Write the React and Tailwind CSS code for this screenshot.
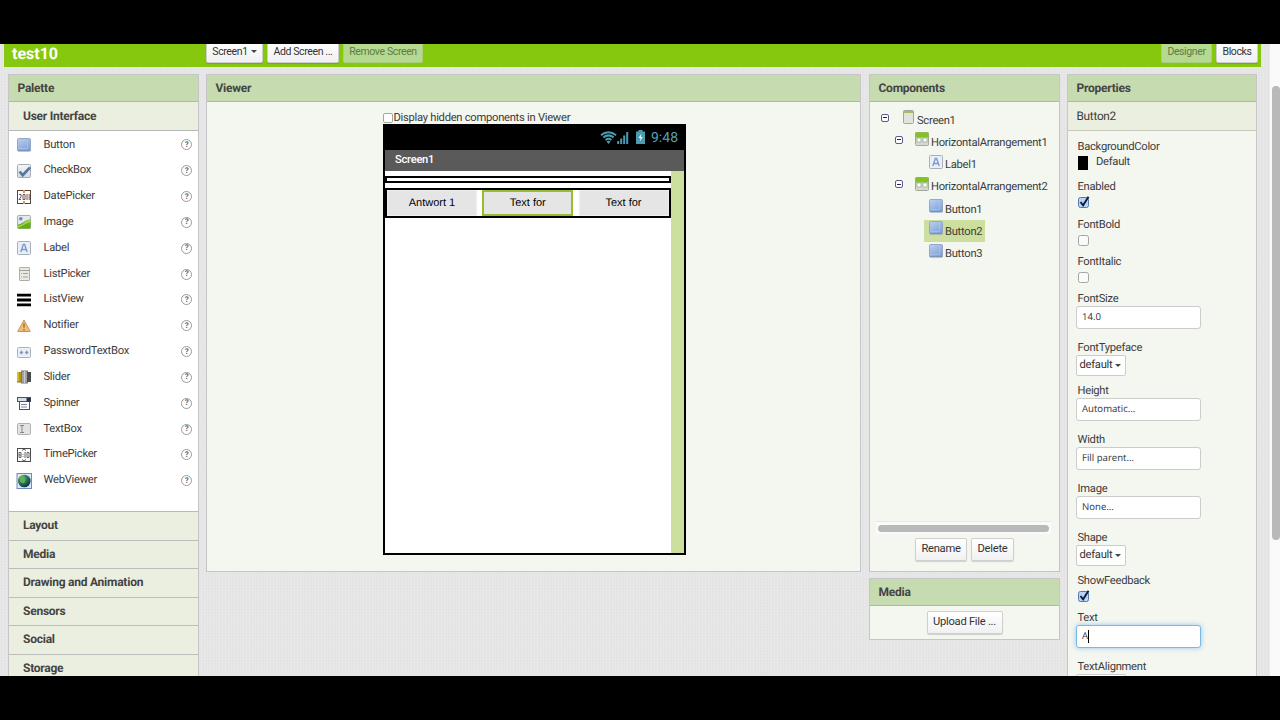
import React from "react";
import clsx from "clsx";

const PALETTE = [
  "Button",
  "CheckBox",
  "DatePicker",
  "Image",
  "Label",
  "ListPicker",
  "ListView",
  "Notifier",
  "PasswordTextBox",
  "Slider",
  "Spinner",
  "TextBox",
  "TimePicker",
  "WebViewer",
];

const SECTIONS = ["Layout", "Media", "Drawing and Animation", "Sensors", "Social", "Storage"];

const TREE = [
  { name: "Screen1", icon: "Screen", toggle: true, indent: "pl-[11px]", gap: "ml-[11px]" },
  { name: "HorizontalArrangement1", icon: "Arrangement", toggle: true, indent: "pl-[25px]", gap: "ml-[11px]" },
  { name: "Label1", icon: "Label", indent: "pl-[59px]" },
  { name: "HorizontalArrangement2", icon: "Arrangement", toggle: true, indent: "pl-[25px]", gap: "ml-[11px]" },
  { name: "Button1", icon: "Button", indent: "pl-[59px]" },
  { name: "Button2", icon: "Button", indent: "pl-[59px]", selected: true },
  { name: "Button3", icon: "Button", indent: "pl-[59px]" },
];

const PROPERTIES = [
  { label: "BackgroundColor", type: "color", value: "Default", height: "h-[40px]" },
  { label: "Enabled", type: "check", value: true, height: "h-[37.5px]" },
  { label: "FontBold", type: "check", value: false, height: "h-[37.5px]" },
  { label: "FontItalic", type: "check", value: false, height: "h-[37px]" },
  { label: "FontSize", type: "text", value: "14.0", height: "h-[49px]" },
  { label: "FontTypeface", type: "select", value: "default", height: "h-[43px]" },
  { label: "Height", type: "text", value: "Automatic...", height: "h-[49px]" },
  { label: "Width", type: "text", value: "Fill parent...", height: "h-[49px]" },
  { label: "Image", type: "text", value: "None...", height: "h-[49px]" },
  { label: "Shape", type: "select", value: "default", height: "h-[43px]" },
  { label: "ShowFeedback", type: "check", value: true, height: "h-[37px]" },
  { label: "Text", type: "text", value: "A", focused: true, height: "h-[49px]" },
  { label: "TextAlignment", type: "select", height: "h-[43px]" },
];

function ComponentIcon({ name }) {
  return (
    <svg width="16" height="16" viewBox="0 0 16 16" className="shrink-0">
      <defs>
        <linearGradient id="blue" x1="0" y1="0" x2="0.6" y2="1">
          <stop offset="0" stopColor="#bdd1f0" />
          <stop offset="1" stopColor="#7fa3d8" />
        </linearGradient>
        <linearGradient id="pale" x1="0" y1="0" x2="0" y2="1">
          <stop offset="0" stopColor="#f4f6f9" />
          <stop offset="1" stopColor="#d5dae2" />
        </linearGradient>
        <radialGradient id="globe" cx="0.35" cy="0.3" r="0.8">
          <stop offset="0" stopColor="#8fc7b0" />
          <stop offset="0.4" stopColor="#2f8060" />
          <stop offset="1" stopColor="#0a2440" />
        </radialGradient>
      </defs>
      {name === "Button" && (
        <>
          <rect x="1.5" y="1.5" width="13" height="12.5" rx="1" fill="url(#blue)" stroke="#98a8c4" />
          <path d="M11.5 2v9.5H2" fill="none" stroke="#a9c1e8" strokeWidth="0.8" />
          <path d="M2 13.7h12.5" stroke="#7b90b4" />
        </>
      )}
      {name === "CheckBox" && (
        <>
          <rect x="1.5" y="1.5" width="13" height="13" rx="1" fill="url(#pale)" stroke="#a6acb6" />
          <path d="M3.5 8.5l3.2 3.7L14 4.5" fill="none" stroke="#53799f" strokeWidth="2.6" />
        </>
      )}
      {name === "DatePicker" && (
        <>
          <rect x="1.5" y="1.5" width="13" height="13" fill="#fff" stroke="#5a4538" />
          <path d="M8 1v3M8 12v3" stroke="#d39a4a" strokeWidth="2" />
          <path d="M3 5.5h2v2.5l-2 2.5h2M7 5.5h2v5H7zM11 5v6M13.2 5v6" fill="none" stroke="#70545c" />
        </>
      )}
      {name === "Image" && (
        <>
          <rect x="1.5" y="1.5" width="13" height="13" rx="1" fill="#e3e9f0" stroke="#a8b1a8" />
          <path d="M2 14.5V10.5C6 10.5 8 6 14.5 5.5v9z" fill="#63ad18" />
          <path d="M2 11.5c5 0 7-5.5 12.5-6v3C9 9 6 13 2 13.5z" fill="#a1d34e" />
          <circle cx="4.8" cy="4.8" r="1.8" fill="#7487ad" />
        </>
      )}
      {name === "Label" && (
        <>
          <rect x="1.5" y="1.5" width="13" height="13" rx="1" fill="#e9eef7" stroke="#a9b0bc" />
          <path d="M4.8 12L7.3 4.5h1.3L11.2 12M5.8 9.5h4.3" fill="none" stroke="#7d9cce" strokeWidth="1.4" />
        </>
      )}
      {name === "ListPicker" && (
        <>
          <rect x="3.5" y="1.5" width="10" height="13" rx="0.5" fill="#e9ebe2" stroke="#aeb0a8" />
          <path d="M4 4.5h9M5 7.5h1M7 7.5h5M5 11h1M7 11h5" stroke="#a0a398" />
        </>
      )}
      {name === "ListView" && <path d="M1 3.2h14M1 8h14M1 12.8h14" stroke="#000" strokeWidth="2.8" />}
      {name === "Notifier" && (
        <>
          <path d="M8 2L14.3 13.5H1.7z" fill="#f4bd72" stroke="#bb985f" strokeLinejoin="round" />
          <path d="M8 5.5v4M8 11v1.5" stroke="#8d6534" strokeWidth="1.3" />
        </>
      )}
      {name === "PasswordTextBox" && (
        <>
          <rect x="1.5" y="3.5" width="13" height="10" rx="1" fill="#eceff5" stroke="#acb2bd" />
          <path d="M3.7 8.5h3.4M5.4 6.8v3.4M9 8.5h3.4M10.7 6.8v3.4" stroke="#839abd" strokeWidth="1.5" />
        </>
      )}
      {name === "Slider" && (
        <>
          <rect x="1" y="3" width="5" height="10" fill="#d8bc24" />
          <path d="M1 13h5M4 3v10" stroke="#806d18" />
          <rect x="5.5" y="2" width="6" height="12" fill="#a3a3a3" stroke="#777" />
          <path d="M8.5 2v12" stroke="#ccc" />
          <rect x="11" y="3" width="4" height="10" fill="#4c4c4c" />
        </>
      )}
      {name === "Spinner" && (
        <>
          <rect x="1.5" y="2.5" width="13" height="4" fill="#d7dfec" stroke="#46536d" />
          <rect x="3.5" y="6.5" width="10" height="8" fill="#fff" stroke="#46536d" />
          <path d="M5 9.5h6M5 12h6" stroke="#7a86a0" />
          <path d="M10.5 3h4v3.5h-4z" fill="#25304a" />
        </>
      )}
      {name === "TextBox" && (
        <>
          <rect x="1.5" y="2.5" width="13" height="11" rx="1" fill="#e3e3e3" stroke="#b1b1b1" />
          <path d="M4 4.5h4M6 4.5v7M4 11.5h4" stroke="#888" />
        </>
      )}
      {name === "TimePicker" && (
        <>
          <rect x="1.5" y="1.5" width="13" height="13" fill="#fff" stroke="#4b4b4b" />
          <path d="M3 5.5h2v5H3zM3 8h2M7 7v.8M7 9v.8M9 5v6M11 5.5h2v5h-2z" fill="none" stroke="#666" />
          <path d="M6 3.5l2-1.5 2 1.5M6 12.5l2 1.5 2-1.5" fill="none" stroke="#555" />
        </>
      )}
      {name === "WebViewer" && (
        <>
          <rect x="1" y="0.5" width="14.5" height="15" fill="#dbe8f6" stroke="#7489b7" />
          <circle cx="8.3" cy="8" r="6.3" fill="url(#globe)" />
          <path d="M4 4c3-3 5-1 4 1s2 2 1 4-4 1-5-1z" fill="#62b34d" />
        </>
      )}
      {name === "Screen" && (
        <>
          <rect x="3.5" y="1.5" width="10" height="13" rx="1" fill="#e1e3de" stroke="#a3a69f" />
          <path d="M4 3h9" stroke="#a5bd62" strokeWidth="2" />
        </>
      )}
      {name === "Arrangement" && (
        <>
          <rect x="1.5" y="1.5" width="13" height="13" rx="1" fill="#d6d9d2" stroke="#a3aa9a" />
          <path d="M1.5 1.5h13v5h-13z" fill="#82c322" />
          <path d="M3 7h4v4H3zM9 7h4v4H9z" fill="#fff" stroke="#8b967c" strokeWidth="0.6" />
        </>
      )}
    </svg>
  );
}

function HelpIcon() {
  return (
    <span className="flex size-[11px] items-center justify-center rounded-full border border-[#9a9a9a] text-[8px] leading-none font-bold text-[#666]">
      ?
    </span>
  );
}

function Caret() {
  return <span className="border-x-[3px] border-t-[3px] border-x-transparent border-t-[#444]" />;
}

function Btn({ children, disabled, className }) {
  return (
    <button
      className={clsx(
        "flex items-center justify-center gap-[3px] rounded-[2px] border whitespace-nowrap",
        disabled
          ? "border-[#a9cf7c] bg-[#b5d990] text-[#5f7c44]"
          : "border-[#cfcfcf] bg-gradient-to-b from-white to-[#f1f1f3] text-[#333] shadow-[0_1px_1px_rgba(0,0,0,0.15)]",
        className
      )}
    >
      {children}
    </button>
  );
}

function CheckSquare({ checked }) {
  return (
    <svg width="13" height="13" viewBox="0 0 13 13">
      <rect x="1.5" y="1.5" width="10" height="10" rx="2" fill={checked ? "#b8d5f6" : "#fafafa"} stroke={checked ? "#5878ac" : "#a5a5a5"} />
      {checked && <path d="M3.5 6l2.6 3.3L11.5 .8" fill="none" stroke="#101c35" strokeWidth="1.9" />}
    </svg>
  );
}

function PanelHeader({ children }) {
  return (
    <div className="h-[27px] shrink-0 border-b border-[#a9bd98] bg-[#c6dbb0] pl-[8.5px] text-[12px] leading-[27px] font-bold tracking-[-0.02em] text-[#444]">
      {children}
    </div>
  );
}

function Palette() {
  return (
    <div className="w-[191px] shrink-0 border border-[#c6c6ca] bg-[#ebefdf]">
      <PanelHeader>Palette</PanelHeader>
      <div className="h-[29px] border-b border-[#b8b8b8] pl-[14px] text-[12px] leading-[29px] font-bold tracking-[-0.02em] text-[#444]">
        User Interface
      </div>
      <div className="h-[381px] border-b border-[#b8b8b8] bg-white pt-[1px]">
        {PALETTE.map((name) => (
          <div key={name} className="flex h-[25.83px] items-center pr-[6px] pl-[7px]">
            <ComponentIcon name={name} />
            <span className="flex-1 pl-[11.5px]">{name}</span>
            <HelpIcon />
          </div>
        ))}
      </div>
      {SECTIONS.map((name) => (
        <div
          key={name}
          className="h-[28.5px] border-b border-[#bdbdbd] pl-[14px] text-[12px] leading-[27.5px] font-bold tracking-[-0.02em] text-[#444]"
        >
          {name}
        </div>
      ))}
    </div>
  );
}

function StatusBar() {
  return (
    <div className="flex h-[26px] items-center justify-end bg-black pr-[6px] tracking-normal text-[#58a3b5]">
      <svg width="17" height="13" viewBox="0 0 17 13">
        <path
          d="M1 4.2c4.5-3.8 10.5-3.8 15 0M3.3 6.6c3.2-2.7 7.2-2.7 10.4 0M5.6 9c1.9-1.6 3.9-1.6 5.8 0"
          fill="none"
          stroke="#4d9bb0"
          strokeWidth="2"
        />
        <path d="M8.5 13L6.5 10.5c1.4-1 2.6-1 4 0z" fill="#4d9bb0" />
      </svg>
      <svg width="12" height="13" viewBox="0 0 12 13">
        <path d="M1.2 13v-3M4.2 13V7.5M7.2 13V4.5M10.2 13V1" stroke="#4d9bb0" strokeWidth="2" />
      </svg>
      <svg width="9" height="14" viewBox="0 0 9 14" className="ml-[7px]">
        <path d="M0 1.5h2.5V0h4v1.5H9V14H0z" fill="#4d9bb0" />
        <path d="M5.5 3.5L2.5 8h2L3.8 11.5 6.8 7h-2z" fill="#e8f5f8" />
      </svg>
      <span className="ml-[6px] pt-px font-[Roboto,sans-serif] text-[14px] leading-none">9:48</span>
    </div>
  );
}

function Viewer() {
  return (
    <div className="flex h-[498px] w-[655px] shrink-0 flex-col border border-[#c6c6ca] bg-[#f4f6f0]">
      <PanelHeader>Viewer</PanelHeader>
      <div className="mt-[9px] ml-[176px] flex h-[13px] items-center">
        <span className="size-[10px] rounded-[2px] border border-[#a5a5a5] bg-white" />
        <span className="pl-[0.5px] leading-[13px]">Display hidden components in Viewer</span>
      </div>
      <div className="ml-[176px] flex h-[431px] w-[303px] flex-col border-2 border-t-0 border-black bg-white font-['Liberation_Sans',sans-serif]">
        <StatusBar />
        <div className="h-[21px] bg-[#5a5a5a] pl-[10px] font-[Roboto,sans-serif] text-[11.2px] leading-[20px] font-medium text-white">
          Screen1
        </div>
        <div className="flex flex-1">
          <div className="flex-1 pt-[5px]">
            <div className="h-[7px] w-[285.5px] border-2 border-black" />
            <div className="mt-[5px] flex h-[30px] w-[285.5px] items-center justify-between border-2 border-black text-[11px] tracking-normal text-black">
              {["Antwort 1", "Text for", "Text for"].map((text, i) => (
                <div
                  key={i}
                  className={clsx(
                    "flex h-[26px] items-center justify-center bg-[#e5e5e5] pt-px",
                    i === 1 ? "w-[91px] border-2 border-[#95bd2f]" : "w-[90px] border border-[#eee]"
                  )}
                >
                  {text}
                </div>
              ))}
            </div>
          </div>
          <div className="w-[14px] bg-[#cddf9f]" />
        </div>
      </div>
    </div>
  );
}

function TreeToggle() {
  return (
    <span className="mb-[4px] flex size-[8px] items-center justify-center rounded-[2px] border border-[#5a5a94] bg-white">
      <span className="h-px w-[4px] bg-[#22226a]" />
    </span>
  );
}

function Components() {
  return (
    <div className="flex h-[498px] flex-col border border-[#c6c6ca] bg-[#f4f6f0]">
      <PanelHeader>Components</PanelHeader>
      <div className="flex-1 pt-[6.5px]">
        {TREE.map((node) => (
          <div key={node.name} className={clsx("flex h-[22.25px] items-center", node.indent)}>
            {node.toggle && <TreeToggle />}
            <div
              className={clsx(
                "flex h-[22px] items-center",
                node.gap,
                !node.toggle && "-ml-[5px] pr-[3px] pl-[4px]",
                node.selected && "bg-[#cddf9f]"
              )}
            >
              <span className="mb-[5px] flex">
                <ComponentIcon name={node.icon} />
              </span>
              <span className="pt-[3px] pl-[1px]">{node.name}</span>
            </div>
          </div>
        ))}
      </div>
      <div className="mr-[8px] ml-[6px] flex h-[13px] items-center border-t border-[#e8e8e8] bg-[#fafafa] px-[2px]">
        <div className="h-[7px] flex-1 rounded-full bg-[#b9b9bb]" />
      </div>
      <div className="flex h-[37px] justify-center gap-[4px] pt-[4px]">
        <Btn className="h-[23px] w-[52px]">Rename</Btn>
        <Btn className="h-[23px] w-[43px]">Delete</Btn>
      </div>
    </div>
  );
}

function PropertyField({ type, value, focused }) {
  if (type === "color") {
    return (
      <div className="flex h-[17px] items-center gap-[8px] pl-[2px]">
        <span className="h-[14px] w-[10px] bg-black" />
        {value}
      </div>
    );
  }
  if (type === "check") {
    return (
      <div className="pt-[2px] pl-[1px]">
        <CheckSquare checked={value} />
      </div>
    );
  }
  if (type === "select") {
    return (
      <div className="-ml-[0.5px] flex h-[21px] w-[50px] items-center justify-center gap-[3px] rounded-[2px] border border-[#ccc] bg-white text-[#333]">
        {value}
        {value && <Caret />}
      </div>
    );
  }
  return (
    <div
      className={clsx(
        "-ml-[0.5px] flex h-[23px] w-[125px] items-center rounded-[3px] border bg-white pl-[5.5px] font-['Open_Sans',sans-serif] text-[9.6px] tracking-normal text-[#333]",
        focused ? "border-[#79b9e6] shadow-[0_0_5px_rgba(82,168,236,0.6)]" : "border-[#ccc]"
      )}
    >
      {value}
      {focused && <span className="h-[13px] w-px bg-black" />}
    </div>
  );
}

function Properties() {
  return (
    <div className="w-[190px] shrink-0 border border-[#c6c6ca] bg-[#f4f6f0]">
      <PanelHeader>Properties</PanelHeader>
      <div className="h-[29px] border-b border-[#c9cbbf] bg-[#ebefdf] pl-[8.5px] text-[11.8px] leading-[29px]">Button2</div>
      <div className="pt-[7px] pl-[8px]">
        {PROPERTIES.map((prop) => (
          <div key={prop.label} className={prop.height}>
            <div className="h-[16px] pl-[1.5px] leading-[17px]">{prop.label}</div>
            <PropertyField {...prop} />
          </div>
        ))}
      </div>
    </div>
  );
}

export default function App() {
  return (
    <div className="h-[720px] w-[1280px] overflow-hidden bg-black py-[44px] font-[Roboto,sans-serif] text-[11.2px] tracking-[-0.024em] text-[#3c3c3c] [text-rendering:geometricPrecision]">
      <div className="flex h-[632px] overflow-hidden bg-[#e5e5e6] bg-[repeating-linear-gradient(90deg,rgba(255,255,255,0.15)_0_1px,transparent_1px_3px),repeating-linear-gradient(0deg,rgba(0,0,0,0.008)_0_1px,transparent_1px_3px)]">
        <div className="w-[1270px] shrink-0">
          <div className="ml-[4px] flex h-[23px] w-[1257px] items-start bg-[#86c80d]">
            <div className="w-[202px] pl-[8px] text-[16px] leading-[20px] font-bold tracking-normal text-white">test10</div>
            <div className="-mt-[4px] flex flex-1 gap-[4px] text-[10.5px] tracking-[-0.036em]">
              <Btn className="h-[23px] w-[57px]">
                Screen1 <Caret />
              </Btn>
              <Btn className="h-[23px] w-[72px]">Add Screen ...</Btn>
              <Btn disabled className="h-[23px] w-[80px]">
                Remove Screen
              </Btn>
            </div>
            <div className="-mt-[4px] flex gap-[4px] pr-[3px] text-[10.5px] tracking-[-0.036em]">
              <Btn disabled className="h-[23px] w-[51px]">
                Designer
              </Btn>
              <Btn className="h-[23px] w-[42px]">Blocks</Btn>
            </div>
          </div>
          <div className="flex items-start gap-[7px] pt-[7px] pl-[8px]">
            <Palette />
            <Viewer />
            <div className="ml-px flex w-[191px] shrink-0 flex-col gap-[6px]">
              <Components />
              <div className="border border-[#c6c6ca] bg-[#f4f6f0]">
                <PanelHeader>Media</PanelHeader>
                <div className="flex h-[33px] justify-center pt-[5px]">
                  <Btn className="h-[23px] w-[76px]">Upload File ...</Btn>
                </div>
              </div>
            </div>
            <Properties />
          </div>
        </div>
        <div className="flex-1 bg-[#fafafa] pt-[42px] pl-[2px]">
          <div className="h-[454px] rounded-full bg-[#b9b9b9]" />
        </div>
      </div>
    </div>
  );
}
